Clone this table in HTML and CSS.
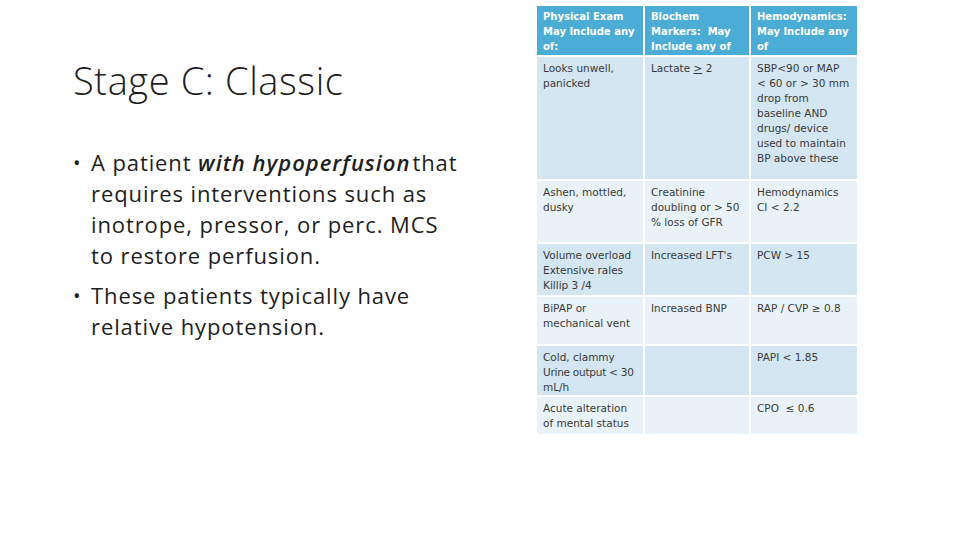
FILE: index.html
```html
<!DOCTYPE html>
<html>
<head>
<meta charset="utf-8">
<link rel="stylesheet" href="styles.css">
</head>
<body>
<div class="slide">
  <div class="left">
    <h1 class="title">Stage C: Classic</h1>
    <ul class="bullets">
      <li>A patient <em>with hypoperfusion</em>that requires interventions such as inotrope, pressor, or perc. MCS to restore perfusion.</li>
      <li>These patients typically have relative hypotension.</li>
    </ul>
  </div>
  <div class="table">
    <div class="cell head">Physical Exam May Include any of:</div>
    <div class="cell head">Biochem Markers:&nbsp; May Include any of</div>
    <div class="cell head">Hemodynamics: May Include any of</div>

    <div class="cell odd">Looks unwell, panicked</div>
    <div class="cell odd">Lactate <u>&gt;</u> 2</div>
    <div class="cell odd">SBP&lt;90 or MAP &lt; 60 or &gt; 30 mm drop from baseline AND drugs/ device used to maintain BP above these</div>

    <div class="cell even">Ashen, mottled, dusky</div>
    <div class="cell even">Creatinine doubling or &gt; 50 % loss of GFR</div>
    <div class="cell even">Hemodynamics<br>CI &lt; 2.2</div>

    <div class="cell odd">Volume overload Extensive rales Killip 3 /4</div>
    <div class="cell odd">Increased LFT's</div>
    <div class="cell odd">PCW &gt; 15</div>

    <div class="cell even">BiPAP or mechanical vent</div>
    <div class="cell even">Increased BNP</div>
    <div class="cell even">RAP / CVP ≥ 0.8</div>

    <div class="cell odd">Cold, clammy <span class="tight">Urine output &lt; 30</span> mL/h</div>
    <div class="cell odd"></div>
    <div class="cell odd">PAPI &lt; 1.85</div>

    <div class="cell even">Acute alteration of mental status</div>
    <div class="cell even"></div>
    <div class="cell even">CPO &nbsp;≤ 0.6</div>
  </div>
</div>
</body>
</html>
```
FILE: styles.css
```css
html, body {
  margin: 0;
  padding: 0;
  background: #ffffff;
}
.slide {
  width: 960px;
  height: 540px;
  display: flex;
  align-items: flex-start;
  background: #ffffff;
}
.left {
  width: 465px;
  padding-left: 73px;
  padding-top: 54px;
  box-sizing: border-box;
  font-family: "Open Sans", "Liberation Sans", sans-serif;
  color: #1e1e1e;
}
.title {
  margin: 0;
  font-family: "Open Sans", sans-serif;
  font-weight: 300;
  font-size: 38px;
  line-height: 52px;
  letter-spacing: 0.6px;
}
.bullets {
  list-style: none;
  margin: 41px 0 0 0;
  padding: 0;
  font-size: 22px;
  line-height: 31px;
}
.bullets li {
  position: relative;
  padding-left: 18px;
  margin-bottom: 9px;
  letter-spacing: 0.9px;
}
.bullets li::before {
  content: "•";
  position: absolute;
  left: 0;
  top: 0;
  font-size: 20px;
}
.bullets em {
  font-style: italic;
  font-weight: 600;
  letter-spacing: 1px;
  margin-right: 2px;
}
.table {
  margin-left: 72px;
  margin-top: 6px;
  width: 320px;
  display: grid;
  grid-template-columns: 106px 104px 106px;
  grid-template-rows: 49px 122px 61px 51px 47px 49px 37px;
  column-gap: 2px;
  row-gap: 2px;
  background: #ffffff;
  font-family: "DejaVu Sans", sans-serif;
  font-size: 10.5px;
  line-height: 15px;
  color: #3a3a3a;
}
.cell {
  padding: 4px 6px 0 6px;
  letter-spacing: 0;
}
.tight {
  white-space: nowrap;
  letter-spacing: -0.25px;
}
.head {
  background: #4bacd6;
  color: #ffffff;
  font-weight: bold;
  font-size: 10px;
  padding-top: 3px;
  letter-spacing: 0;
}
.odd {
  background: #d3e6f2;
}
.even {
  background: #e9f2f8;
}
```
